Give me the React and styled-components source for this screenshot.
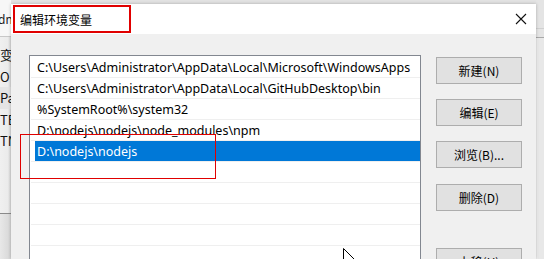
import styled, { createGlobalStyle } from 'styled-components';

const PATHS = [
  'C:\\Users\\Administrator\\AppData\\Local\\Microsoft\\WindowsApps',
  'C:\\Users\\Administrator\\AppData\\Local\\GitHubDesktop\\bin',
  '%SystemRoot%\\system32',
  'D:\\nodejs\\nodejs\\node_modules\\npm',
  'D:\\nodejs\\nodejs',
  '',
  '',
  '',
  '',
  '',
];

const BUTTONS = [
  { label: '新建(N)', top: 0 },
  { label: '编辑(E)', top: 15 },
  { label: '浏览(B)...', top: 15 },
  { label: '删除(D)', top: 16 },
  { label: '上移(U)', top: 37 },
];

const BEHIND = ['变', 'O', 'Pa', 'TE', 'TN'];

function App() {
  return (
    <>
      <GlobalStyle />
      <Page>
        <BehindLeft>
          <BehindHeader>dm</BehindHeader>
          <BehindRows>
            {BEHIND.map((t, i) => (
              <BehindRow key={i} $active={i === 2}>
                {t}
              </BehindRow>
            ))}
          </BehindRows>
          <BehindFooter />
        </BehindLeft>

        <Dialog>
          <TitleBar>
            <Title>编辑环境变量</Title>
            <CloseButton>
              <svg width="12" height="12" viewBox="0 0 12 12">
                <path d="M1 1 L11 11 M11 1 L1 11" stroke="#111" strokeWidth="1.1" />
              </svg>
            </CloseButton>
          </TitleBar>
          <Body>
            <ListBox>
              {PATHS.map((p, i) => (
                <Row key={i}>
                  <RowLabel $selected={i === 4}>{p}</RowLabel>
                </Row>
              ))}
            </ListBox>
            <Buttons>
              {BUTTONS.map(b => (
                <Button key={b.label} $top={b.top}>
                  {b.label}
                </Button>
              ))}
            </Buttons>
          </Body>
        </Dialog>

        <BehindRight>
          <BehindRightTop />
          <BehindRightBody />
        </BehindRight>

        <Mark $x={13} $y={5} $w={118} $h={28} $b={2} />
        <Mark $x={20} $y={134} $w={196} $h={45} $b={1.5} />
        <Cursor width="14" height="20" viewBox="0 0 14 20">
          <path
            d="M0.5 0.5 L0.5 16.5 L4.5 12.5 L7.5 19 L9.5 18 L6.5 11.5 L11.5 11.5 Z"
            fill="#fff"
            stroke="#000"
            strokeWidth="1"
          />
        </Cursor>
      </Page>
    </>
  );
}

const GlobalStyle = createGlobalStyle`
  body {
    margin: 0;
    background: #e6e6e6;
  }
`;

const Page = styled.div`
  position: relative;
  display: flex;
  width: 544px;
  height: 259px;
  overflow: hidden;
  background: #e2e2e2;
  font-family: 'Segoe UI', 'Noto Sans', 'Noto Sans CJK SC', sans-serif;
  font-size: 12px;
  color: #000;
`;

const BehindLeft = styled.div`
  width: 11px;
  flex: none;
  display: flex;
  flex-direction: column;
  overflow: hidden;
  background: linear-gradient(to right, #f0f0f0 0, #ebebeb 8px, #d8d8d8 11px);
`;

const BehindHeader = styled.div`
  height: 36px;
  line-height: 40px;
  margin-left: -2px;
  border-bottom: 1px solid #c8c8c8;
  background: #f7f7f7;
  font-family: 'Segoe UI', 'Noto Sans', sans-serif;
  color: #222;
`;

const BehindRows = styled.div`
  height: 176px;
  padding-top: 7px;
  box-sizing: border-box;
`;

const BehindRow = styled.div`
  height: 21.5px;
  line-height: 21.5px;
  font-family: 'Noto Sans CJK SC', 'Noto Sans', sans-serif;
  font-size: 13px;
  background: ${p => (p.$active ? '#e4e4e4' : 'transparent')};
  color: #111;
`;

const BehindFooter = styled.div`
  flex: 1;
  border-top: 1px solid #8a8a8a;
  background: linear-gradient(to right, #e8e8e8, #d6d6d6);
`;

const Dialog = styled.div`
  width: 525px;
  flex: none;
  display: flex;
  flex-direction: column;
  margin-top: 4px;
  background: #f0f0f0;
  box-shadow: 0 0 3px rgba(0, 0, 0, 0.25);
  z-index: 1;
`;

const TitleBar = styled.div`
  height: 30px;
  flex: none;
  display: flex;
  align-items: center;
  justify-content: space-between;
  padding-left: 9px;
  background: #fff;
`;

const Title = styled.span`
  font-family: 'Noto Sans CJK SC', sans-serif;
  font-size: 12px;
  padding-top: 1px;
`;

const CloseButton = styled.div`
  width: 30px;
  height: 30px;
  display: flex;
  align-items: center;
  justify-content: center;
`;

const Body = styled.div`
  flex: 1;
  display: flex;
  gap: 15px;
  padding: 21px 0 0 18px;
`;

const ListBox = styled.div`
  width: 392px;
  box-sizing: border-box;
  padding: 1px 0 0 1px;
  border: 1px solid #828790;
  border-bottom: none;
  background: #fff;
`;

const Row = styled.div`
  display: flex;
  height: 21px;
  box-sizing: border-box;
  border-bottom: 1px solid #efefef;
`;

const RowLabel = styled.div`
  flex: 1;
  margin-left: 4px;
  padding-left: 2px;
  line-height: 21px;
  font-size: 12.5px;
  white-space: nowrap;
  background: ${p => (p.$selected ? '#0078d7' : 'transparent')};
  color: ${p => (p.$selected ? '#fff' : '#000')};
`;

const Buttons = styled.div`
  display: flex;
  flex-direction: column;
  padding-top: 2px;
`;

const Button = styled.div`
  width: 86px;
  height: 27px;
  flex: none;
  box-sizing: border-box;
  margin-top: ${p => p.$top}px;
  display: flex;
  align-items: center;
  justify-content: center;
  background: #e1e1e1;
  border: 1px solid #adadad;
  font-family: 'Noto Sans CJK SC', sans-serif;
  font-size: 12px;
`;

const BehindRight = styled.div`
  flex: 1;
  display: flex;
  flex-direction: column;
  background: #e4e4e4;
`;

const BehindRightTop = styled.div`
  height: 28px;
  border-bottom: 1px solid #d0d0d0;
`;

const BehindRightBody = styled.div`
  flex: 1;
  margin-top: 8px;
  border-top: 1px solid #a8a8a8;
  background: linear-gradient(to right, #efefef 0, #efefef 2px, #e8e8e8 2px);
`;

const Mark = styled.div`
  position: absolute;
  left: ${p => p.$x}px;
  top: ${p => p.$y}px;
  width: ${p => p.$w}px;
  height: ${p => p.$h}px;
  box-sizing: border-box;
  border: ${p => p.$b}px solid #e00000;
  z-index: 5;
`;

const Cursor = styled.svg`
  position: absolute;
  left: 343px;
  top: 248px;
  z-index: 6;
`;

export default App;
